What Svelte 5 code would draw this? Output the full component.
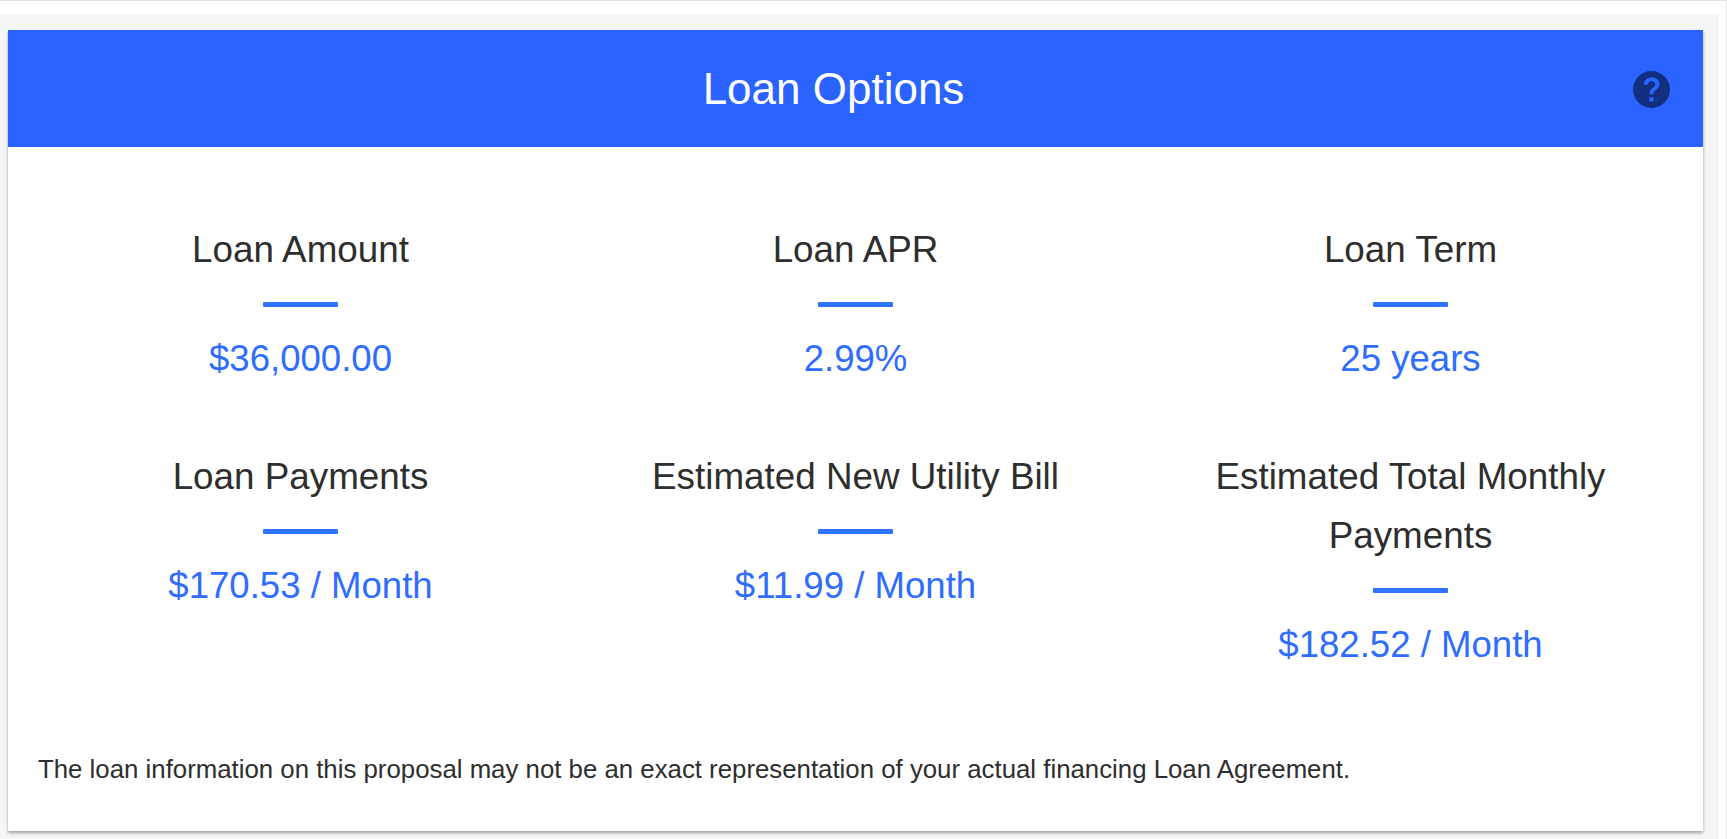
<script>
  const options = [
    { label: 'Loan Amount', value: '$36,000.00' },
    { label: 'Loan APR', value: '2.99%' },
    { label: 'Loan Term', value: '25 years' },
    { label: 'Loan Payments', value: '$170.53 / Month' },
    { label: 'Estimated New Utility Bill', value: '$11.99 / Month' },
    { label: 'Estimated Total Monthly Payments', value: '$182.52 / Month' }
  ]
</script>

<div class="page">
  <div class="backdrop">
    <section class="card">
      <header class="card-header">
        <h2>Loan Options</h2>
        <svg class="help" viewBox="0 0 24 24" aria-hidden="true">
          <path fill-rule="evenodd" d="M12 0a12 12 0 1 0 0 24a12 12 0 0 0 0-24zM10.6 17h2.8v2.8h-2.8zM12 4.2c-2.9 0-5 1.8-5.1 4.7h2.6c.1-1.4 1-2.3 2.5-2.3c1.4 0 2.4.8 2.4 2c0 1-.5 1.5-1.5 2.2c-1.4 1-2.1 1.9-2.1 3.6v.6h2.6v-.4c0-1 .4-1.5 1.5-2.3c1.3-.9 2.2-2 2.2-3.8c0-2.6-2.1-4.3-5.1-4.3z"/>
        </svg>
      </header>
      <div class="grid">
        {#each options as item}
          <div class="item">
            <div class="label">{item.label}</div>
            <div class="rule"></div>
            <div class="value">{item.value}</div>
          </div>
        {/each}
      </div>
      <p class="note">The loan information on this proposal may not be an exact representation of your actual financing Loan Agreement.</p>
    </section>
  </div>
</div>

<style>
  :global(body) {
    margin: 0;
    background: #fff;
  }

  .page {
    box-sizing: border-box;
    height: 839px;
    padding-top: 13px;
    padding-right: 7px;
    border-top: 1px solid #e2e2e2;
    border-right: 1px solid #e2e2e2;
    overflow: hidden;
    font-family: "Liberation Sans", Arial, sans-serif;
  }

  .backdrop {
    box-sizing: border-box;
    height: 825px;
    padding: 16px 16px 0 8px;
    background: #f5f6f8;
  }

  .card {
    box-sizing: border-box;
    height: 801px;
    background: #fff;
    box-shadow: 0 2px 3px rgba(0, 0, 0, 0.35);
  }

  .card-header {
    position: relative;
    height: 117px;
    box-sizing: border-box;
    padding-right: 44px;
    display: flex;
    align-items: center;
    justify-content: center;
    background: #2a63ff;
  }

  h2 {
    margin: 0;
    font-size: 44px;
    font-weight: 400;
    color: #fff;
  }

  .help {
    position: absolute;
    right: 33px;
    top: 41px;
    width: 37px;
    height: 37px;
    fill: #12307f;
  }

  .grid {
    display: grid;
    grid-template-columns: repeat(3, 555px);
    row-gap: 60px;
    padding: 74px 15px 0;
  }

  .item {
    text-align: center;
  }

  .label {
    font-size: 36.8px;
    line-height: 58.6px;
    color: #2e2e2e;
  }

  .rule {
    width: 75px;
    height: 5px;
    margin: 22.4px auto 0;
    border-radius: 1px;
    background: #2f74ff;
  }

  .value {
    margin-top: 23px;
    font-size: 36.6px;
    line-height: 58px;
    color: #2f6dff;
  }

  .note {
    margin: 0;
    padding: 80px 30px 0;
    font-size: 25.8px;
    line-height: 30px;
    color: #2e2e2e;
  }
</style>
